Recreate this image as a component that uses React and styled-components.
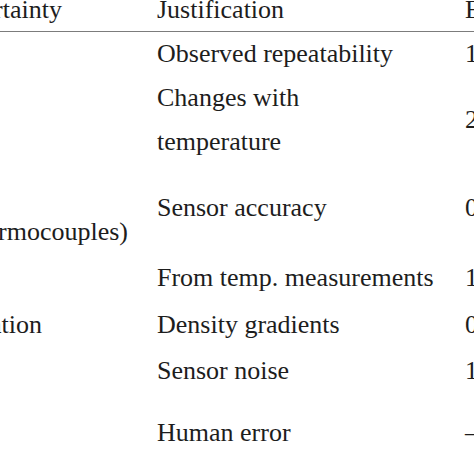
import React from "react";
import styled, { createGlobalStyle } from "styled-components";

const Global = createGlobalStyle`
  html, body {
    margin: 0;
    padding: 0;
    background: #ffffff;
    width: 474px;
    height: 474px;
    overflow: hidden;
  }
  body {
    font-family: "Liberation Serif", "Times New Roman", serif;
    color: #1d1d1d;
  }
`;

const Table = styled.div`
  display: grid;
  grid-template-columns: 157px 308px 1fr;
  grid-template-rows: auto 44px 110px 70px 47px 46px 62px 62px;
  width: 474px;
  font-size: 26px;
`;

const HeadCell = styled.div`
  display: flex;
  justify-content: ${(p) => (p.$end ? "flex-end" : "flex-start")};
  padding-right: ${(p) => p.$trim || 0}px;
  line-height: 20px;
  height: 20px;
  padding-bottom: 11px;
  border-bottom: 1.5px solid #7c7c7c;
  white-space: nowrap;
  overflow: ${(p) => (p.$end ? "hidden" : "visible")};
`;

const Cell = styled.div`
  align-self: start;
  line-height: 44px;
  padding-top: ${(p) => p.$drop || 0}px;
  white-space: nowrap;
`;

const LeadCell = styled(Cell)`
  display: flex;
  justify-content: flex-end;
  overflow: hidden;
  padding-right: ${(p) => p.$trim || 0}px;
`;

const rows = [
  { lead: "", trim: 0, leadDrop: 0, lines: ["Observed repeatability"], value: "1.5", valueDrop: 0 },
  { lead: "", trim: 0, leadDrop: 0, lines: ["Changes with", "temperature"], value: "2.0", valueDrop: 22 },
  { lead: "Temperature (thermocouples)", trim: 29, leadDrop: 24, lines: ["Sensor accuracy"], value: "0.5", valueDrop: 0 },
  { lead: "", trim: 0, leadDrop: 0, lines: ["From temp. measurements"], value: "1.2", valueDrop: 0 },
  { lead: "Stratification", trim: 115, leadDrop: 0, lines: ["Density gradients"], value: "0.3", valueDrop: 0 },
  { lead: "", trim: 0, leadDrop: 0, lines: ["Sensor noise"], value: "1.0", valueDrop: 0 },
  { lead: "", trim: 0, leadDrop: 0, lines: ["Human error"], value: "–", valueDrop: 0 },
];

export default function App() {
  return (
    <>
      <Global />
      <Table>
        <HeadCell $end $trim={95}>Uncertainty</HeadCell>
        <HeadCell>Justification</HeadCell>
        <HeadCell>Estimate</HeadCell>
        {rows.map((r, i) => (
          <React.Fragment key={i}>
            <LeadCell $trim={r.trim} $drop={r.leadDrop}>
              {r.lead}
            </LeadCell>
            <Cell>
              {r.lines.map((l, j) => (
                <div key={j}>{l}</div>
              ))}
            </Cell>
            <Cell $drop={r.valueDrop}>{r.value}</Cell>
          </React.Fragment>
        ))}
      </Table>
    </>
  );
}
